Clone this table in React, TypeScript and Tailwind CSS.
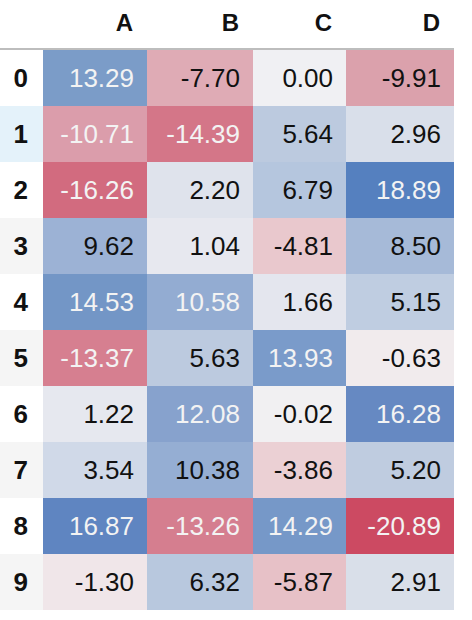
import React from "react";

type Cell = { v: string; bg: string; light?: boolean };

const rows: { idx: string; idxBg: string; cells: Cell[] }[] = [
  {
    idx: "0",
    idxBg: "bg-white",
    cells: [
      { v: "13.29", bg: "bg-[#7b9cc8]", light: true },
      { v: "-7.70", bg: "bg-[#dfabb5]" },
      { v: "0.00", bg: "bg-[#f0f0f3]" },
      { v: "-9.91", bg: "bg-[#dba1ac]" },
    ],
  },
  {
    idx: "1",
    idxBg: "bg-[#e4f2fa]",
    cells: [
      { v: "-10.71", bg: "bg-[#db9dab]", light: true },
      { v: "-14.39", bg: "bg-[#d47688]", light: true },
      { v: "5.64", bg: "bg-[#bccadf]" },
      { v: "2.96", bg: "bg-[#d9dfea]" },
    ],
  },
  {
    idx: "2",
    idxBg: "bg-white",
    cells: [
      { v: "-16.26", bg: "bg-[#d26b7f]", light: true },
      { v: "2.20", bg: "bg-[#dfe3ec]" },
      { v: "6.79", bg: "bg-[#b5c6de]" },
      { v: "18.89", bg: "bg-[#5580bf]", light: true },
    ],
  },
  {
    idx: "3",
    idxBg: "bg-[#f5f5f5]",
    cells: [
      { v: "9.62", bg: "bg-[#9cb2d5]" },
      { v: "1.04", bg: "bg-[#e7e8ef]" },
      { v: "-4.81", bg: "bg-[#e9c8cd]" },
      { v: "8.50", bg: "bg-[#a6bad8]" },
    ],
  },
  {
    idx: "4",
    idxBg: "bg-white",
    cells: [
      { v: "14.53", bg: "bg-[#7396c6]", light: true },
      { v: "10.58", bg: "bg-[#93acd2]", light: true },
      { v: "1.66", bg: "bg-[#e4e6ee]" },
      { v: "5.15", bg: "bg-[#bfcde1]" },
    ],
  },
  {
    idx: "5",
    idxBg: "bg-[#f5f5f5]",
    cells: [
      { v: "-13.37", bg: "bg-[#d67f90]", light: true },
      { v: "5.63", bg: "bg-[#bccadf]" },
      { v: "13.93", bg: "bg-[#7a9bca]", light: true },
      { v: "-0.63", bg: "bg-[#f1ebed]" },
    ],
  },
  {
    idx: "6",
    idxBg: "bg-white",
    cells: [
      { v: "1.22", bg: "bg-[#e6e8ef]" },
      { v: "12.08", bg: "bg-[#87a2cd]", light: true },
      { v: "-0.02", bg: "bg-[#f1f0f2]" },
      { v: "16.28", bg: "bg-[#6689c2]", light: true },
    ],
  },
  {
    idx: "7",
    idxBg: "bg-[#f5f5f5]",
    cells: [
      { v: "3.54", bg: "bg-[#d0d9e8]" },
      { v: "10.38", bg: "bg-[#95aed3]" },
      { v: "-3.86", bg: "bg-[#ebd0d4]" },
      { v: "5.20", bg: "bg-[#bfcce0]" },
    ],
  },
  {
    idx: "8",
    idxBg: "bg-white",
    cells: [
      { v: "16.87", bg: "bg-[#5f85c1]", light: true },
      { v: "-13.26", bg: "bg-[#d57e8f]", light: true },
      { v: "14.29", bg: "bg-[#7698c8]", light: true },
      { v: "-20.89", bg: "bg-[#cc4a62]", light: true },
    ],
  },
  {
    idx: "9",
    idxBg: "bg-[#f5f5f5]",
    cells: [
      { v: "-1.30", bg: "bg-[#f0e6e9]" },
      { v: "6.32", bg: "bg-[#b8c8de]" },
      { v: "-5.87", bg: "bg-[#e7c1c7]" },
      { v: "2.91", bg: "bg-[#d9dfe9]" },
    ],
  },
];

export default function App() {
  return (
    <div className="min-h-[620px] w-[472px] bg-white font-['Liberation_Sans',Arial,sans-serif] text-[#111]">
      <div className="grid w-[454px] grid-cols-[43px_104px_106px_93px_108px]">
        <div className="h-[50px] border-b-2 border-[#bdbdbd]" />
        {["A", "B", "C", "D"].map((h) => (
          <div
            key={h}
            className="flex h-[50px] items-center justify-end border-b-2 border-[#bdbdbd] pr-[14px] pb-[2px] text-[24px] font-bold"
          >
            {h}
          </div>
        ))}
        {rows.map((r) => (
          <React.Fragment key={r.idx}>
            <div
              className={`flex h-[56px] items-center justify-end pr-[15px] text-[26px] font-bold ${r.idxBg}`}
            >
              {r.idx}
            </div>
            {r.cells.map((c, i) => (
              <div
                key={i}
                className={`flex h-[56px] items-center justify-end pr-[13px] pt-[1px] text-[26px] ${c.bg} ${
                  c.light ? "text-[#f3f3f3]" : "text-[#111]"
                }`}
              >
                {c.v}
              </div>
            ))}
          </React.Fragment>
        ))}
      </div>
    </div>
  );
}
